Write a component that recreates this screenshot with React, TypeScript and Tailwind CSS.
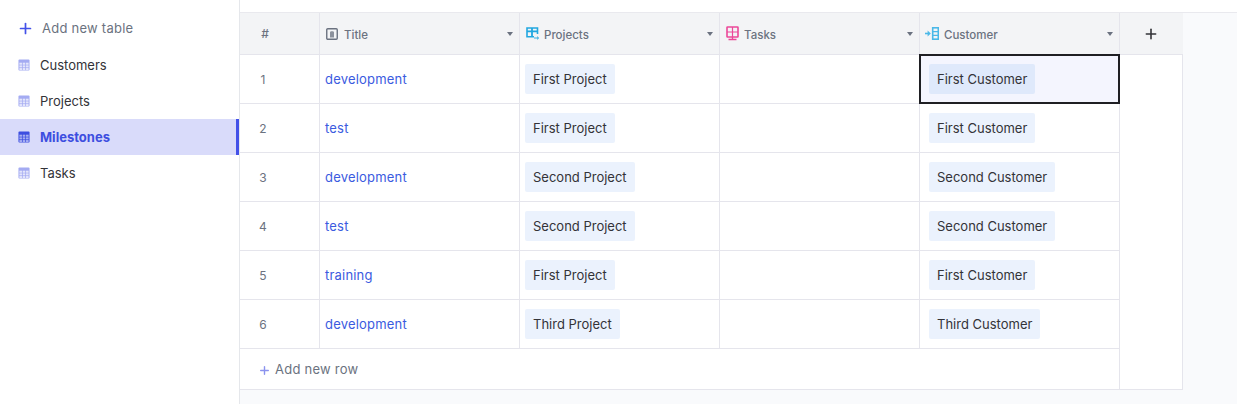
import { Plus } from "lucide-react";

const tables = ["Customers", "Projects", "Milestones", "Tasks"];

const rows = [
  { id: 1, title: "development", project: "First Project", customer: "First Customer" },
  { id: 2, title: "test", project: "First Project", customer: "First Customer" },
  { id: 3, title: "development", project: "Second Project", customer: "Second Customer" },
  { id: 4, title: "test", project: "Second Project", customer: "Second Customer" },
  { id: 5, title: "training", project: "First Project", customer: "First Customer" },
  { id: 6, title: "development", project: "Third Project", customer: "Third Customer" },
];

function TableIcon({ active }: { active: boolean }) {
  const cells = [4, 6.9, 9.8];
  return (
    <svg width="12" height="12" viewBox="0 0 13 13" className={active ? "text-[#3d4ee0]" : "text-[#a4abf2]"}>
      <rect x="0.5" y="0.5" width="12" height="12" rx="1" fill="currentColor" />
      {cells.map((y) =>
        [1.5, 5.1, 8.7].map((x) => (
          <rect key={`${x}-${y}`} x={x} y={y} width="2.8" height="2.2" fill="#fff" opacity={active ? 0.55 : 0.7} />
        ))
      )}
    </svg>
  );
}

function TitleIcon() {
  return (
    <svg width="12" height="12" viewBox="0 0 12 12" fill="none">
      <rect x="0.75" y="0.75" width="10.5" height="10.5" rx="1" stroke="#6b7280" strokeWidth="1.4" />
      <path d="M4 9.5V4.2C4 3 8 3 8 4.2v5.3z" fill="#8b919c" />
    </svg>
  );
}

function ProjectsIcon() {
  return (
    <svg width="13" height="13" viewBox="0 0 13 13" fill="none">
      <path d="M8 9.8H1V1h10.5v6" stroke="#22a7e0" strokeWidth="1.6" />
      <path d="M1 4.4h10.5M6 1v9" stroke="#22a7e0" strokeWidth="1.8" />
      <path d="M8 11h4.5M11 9.6l1.5 1.4-1.5 1.4" stroke="#22a7e0" strokeWidth="0.9" />
    </svg>
  );
}

function TasksIcon() {
  return (
    <svg width="13" height="15" viewBox="0 0 13 15" fill="none">
      <rect x="1" y="1" width="11" height="10" rx="0.5" stroke="#ec4899" strokeWidth="1.6" />
      <path d="M1 6h11M6.5 1v10" stroke="#ec4899" strokeWidth="1.2" />
      <path d="M6.5 11v2.8M2.5 13.5h8" stroke="#ec4899" strokeWidth="1.3" />
    </svg>
  );
}

function CustomerIcon() {
  return (
    <svg width="14" height="13" viewBox="0 0 14 13" fill="none">
      <path d="M0 6.5h3.5" stroke="#4bb8e8" strokeWidth="1.6" />
      <path d="M2.6 3.6l3.2 2.9-3.2 2.9z" fill="#4bb8e8" />
      <rect x="7.7" y="0.8" width="5.6" height="11.4" stroke="#4bb8e8" strokeWidth="1.6" />
      <path d="M7.7 4.6h5.6M7.7 8.4h5.6" stroke="#4bb8e8" strokeWidth="1.3" />
    </svg>
  );
}

function HeaderCell({ icon, label }: { icon: React.ReactNode; label: string }) {
  return (
    <div className="h-[42px] flex items-center bg-[#f3f4f6] border-b border-r border-[#e5e5ec] pl-[5px] pr-[6px]">
      <span className="w-[14px] flex justify-center shrink-0">{icon}</span>
      <span className="ml-[5px] pt-[4px] text-[11.5px] font-medium text-[#6b7280]">{label}</span>
      <span className="ml-auto w-0 h-0 border-x-[3.5px] border-x-transparent border-t-[4px] border-t-[#6b7280]" />
    </div>
  );
}

function Chip({ text, selected }: { text: string; selected?: boolean }) {
  return (
    <span className={`h-[30px] px-2 pt-[2px] flex items-center rounded-[2px] text-[13px] text-[#333338] ${selected ? "bg-[#dfe9fb]" : "bg-[#ebf2fd]"}`}>
      {text}
    </span>
  );
}

export default function App() {
  return (
    <div className="w-[1237px] h-[404px] flex overflow-hidden bg-[#f9fafc] font-['Inter',sans-serif]">
      <aside className="w-[240px] shrink-0 bg-white border-r border-[#e5e7eb]">
        <div className="h-[47px] pt-[10px] flex items-center pl-[17px] text-[13px] tracking-[0.25px] text-[#6b7280]">
          <Plus size={17} strokeWidth={2.4} className="text-[#4351e8]" />
          <span className="ml-[8px]">Add new table</span>
        </div>
        {tables.map((name) => {
          const active = name === "Milestones";
          return (
            <div
              key={name}
              className={`h-[36px] flex items-center pl-[18px] text-[13px] ${
                active ? "bg-[#d9dbfa] border-r-[3px] border-[#4351e8] font-bold text-[#3d4ee0]" : "text-[#333338]"
              }`}
            >
              <TableIcon active={active} />
              <span className="ml-[10px] pt-[2px]">{name}</span>
            </div>
          );
        })}
      </aside>

      <main className="flex-1 min-w-0">
        <div className="h-[13px] bg-white border-b border-[#e9e9ee]" />
        <div className="w-[943px] grid grid-cols-[80px_200px_200px_200px_200px_63px] bg-white border-b border-r border-[#e5e5ec]">
          <div className="h-[42px] flex items-center justify-center bg-[#f3f4f6] border-b border-r border-[#e5e5ec] text-[12px] font-medium text-[#6b7280] pr-[29px]">
            #
          </div>
          <HeaderCell icon={<TitleIcon />} label="Title" />
          <HeaderCell icon={<ProjectsIcon />} label="Projects" />
          <HeaderCell icon={<TasksIcon />} label="Tasks" />
          <HeaderCell icon={<CustomerIcon />} label="Customer" />
          <div className="h-[42px] flex items-center justify-center bg-[#f3f4f6] border-b border-[#e5e5ec] pr-[2px]">
            <Plus size={16} strokeWidth={2.4} className="text-[#333338]" />
          </div>

          {rows.map((row, i) => (
            <div key={row.id} className="contents">
              <div className="h-[49px] flex items-center justify-center pt-[2px] border-b border-r border-[#e5e5ec] text-[12px] text-[#6b7280] pr-[33px]">
                {row.id}
              </div>
              <div className="h-[49px] flex items-center pl-[5px] pt-[2px] border-b border-r border-[#e5e5ec] text-[13px] tracking-[0.2px] text-[#3b5be0]">
                {row.title}
              </div>
              <div className="h-[49px] flex items-center pl-[5px] border-b border-r border-[#e5e5ec]">
                <Chip text={row.project} />
              </div>
              <div className="h-[49px] border-b border-r border-[#e5e5ec]" />
              <div
                className={`relative h-[49px] flex items-center pl-[9px] border-b border-r border-[#e5e5ec] ${i === 0 ? "bg-[#f4f5fe]" : ""}`}
              >
                {i === 0 && <div className="absolute -left-px -top-px -right-px -bottom-px border-2 border-[#1f1f23]" />}
                <Chip text={row.customer} selected={i === 0} />
              </div>
              {i === 0 && <div className="row-span-7 col-start-6 row-start-2" />}
            </div>
          ))}

          <div className="col-span-5 h-[40px] flex items-center pl-[18px] pt-[2px] border-r border-[#e5e5ec] text-[13px] tracking-[0.25px] text-[#6b7280]">
            <Plus size={13} strokeWidth={2.6} className="text-[#8b93ee]" />
            <span className="ml-[4px]">Add new row</span>
          </div>
        </div>
      </main>
    </div>
  );
}
